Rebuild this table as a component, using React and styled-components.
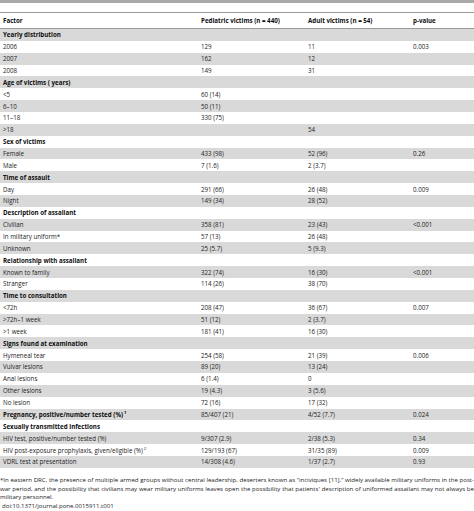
import React from "react";
import styled, { createGlobalStyle } from "styled-components";

const GlobalStyle = createGlobalStyle`
  html, body {
    margin: 0;
    padding: 0;
    background: #ffffff;
  }
  body {
    font-family: "Open Sans", "Noto Sans", "DejaVu Sans", sans-serif;
    color: #1e1e1e;
  }
`;

const Page = styled.div`
  width: 474px;
  height: 511px;
  overflow: hidden;
`;

const TopBand = styled.div`
  height: 3px;
  background: #a9a9a9;
  margin-bottom: 9px;
`;

const Table = styled.div`
  display: grid;
  grid-template-columns: 198px 107px 105px 1fr;
  border-top: 1px solid #9a9a9a;
`;

const Row = styled.div`
  display: contents;
`;

const Cell = styled.div`
  display: flex;
  align-items: center;
  height: ${(p) => (p.$head ? "15px" : "11.86px")};
  padding-left: 3px;
  font-size: 6.2px;
  font-weight: ${(p) => (p.$bold ? 700 : 400)};
  color: ${(p) => (p.$bold ? "#0e0e0e" : "#222222")};
  background: ${(p) => (p.$shade ? "#d9d9d9" : "#ffffff")};
  border-bottom: ${(p) => (p.$head ? "1px solid #9a9a9a" : "none")};
  white-space: nowrap;

  sup {
    font-size: 4.2px;
    line-height: 0;
    position: relative;
    top: -1.5px;
    vertical-align: baseline;
    margin-left: 1px;
  }
`;

const Notes = styled.div`
  margin-top: 8px;
  font-size: 6.1px;
  line-height: 8.7px;
  color: #222222;
`;

const NoteLine = styled.div`
  text-align: ${(p) => (p.$fill ? "justify" : "left")};
  text-align-last: ${(p) => (p.$fill ? "justify" : "left")};
  white-space: nowrap;
  padding-left: ${(p) => (p.$indent ? "2px" : "0")};
`;

const rows = [
  { group: "Yearly distribution" },
  { f: "2006", a: "129", b: "11", p: "0.003" },
  { f: "2007", a: "162", b: "12" },
  { f: "2008", a: "149", b: "31" },
  { group: "Age of victims ( years)" },
  { f: "<5", a: "60 (14)" },
  { f: "6–10", a: "50 (11)" },
  { f: "11–18", a: "330 (75)" },
  { f: ">18", b: "54" },
  { group: "Sex of victims" },
  { f: "Female", a: "433 (98)", b: "52 (96)", p: "0.26" },
  { f: "Male", a: "7 (1.6)", b: "2 (3.7)" },
  { group: "Time of assault" },
  { f: "Day", a: "291 (66)", b: "26 (48)", p: "0.009" },
  { f: "Night", a: "149 (34)", b: "28 (52)" },
  { group: "Description of assailant" },
  { f: "Civilian", a: "358 (81)", b: "23 (43)", p: "<0.001" },
  { f: "In military uniform*", a: "57 (13)", b: "26 (48)" },
  { f: "Unknown", a: "25 (5.7)", b: "5 (9.3)" },
  { group: "Relationship with assailant" },
  { f: "Known to family", a: "322 (74)", b: "16 (30)", p: "<0.001" },
  { f: "Stranger", a: "114 (26)", b: "38 (70)" },
  { group: "Time to consultation" },
  { f: "<72h", a: "208 (47)", b: "36 (67)", p: "0.007" },
  { f: ">72h–1 week", a: "51 (12)", b: "2 (3.7)" },
  { f: ">1 week", a: "181 (41)", b: "16 (30)" },
  { group: "Signs found at examination" },
  { f: "Hymeneal tear", a: "254 (58)", b: "21 (39)", p: "0.006" },
  { f: "Vulvar lesions", a: "89 (20)", b: "13 (24)" },
  { f: "Anal lesions", a: "6 (1.4)", b: "0" },
  { f: "Other lesions", a: "19 (4.3)", b: "3 (5.6)" },
  { f: "No lesion", a: "72 (16)", b: "17 (32)" },
  {
    f: "Pregnancy, positive/number tested (%)",
    sup: "1",
    bold: true,
    a: "85/407 (21)",
    b: "4/52 (7.7)",
    p: "0.024",
  },
  { group: "Sexually transmitted infections" },
  { f: "HIV test, positive/number tested (%)", a: "9/307 (2.9)", b: "2/38 (5.3)", p: "0.34" },
  {
    f: "HIV post-exposure prophylaxis, given/eligible (%)",
    sup: "2",
    a: "129/193 (67)",
    b: "31/35 (89)",
    p: "0.009",
  },
  { f: "VDRL test at presentation", a: "14/308 (4.6)", b: "1/37 (2.7)", p: "0.93" },
];

const App = () => {
  return (
    <>
      <GlobalStyle />
      <Page>
        <TopBand />
        <Table>
          <Row>
            <Cell $head $bold>Factor</Cell>
            <Cell $head $bold>Pediatric victims (n = 440)</Cell>
            <Cell $head $bold>Adult victims (n = 54)</Cell>
            <Cell $head $bold>p-value</Cell>
          </Row>
          {rows.map((r, idx) => {
            const shade = idx % 2 === 0;
            if (r.group) {
              return (
                <Row key={idx}>
                  <Cell $bold $shade={shade}>{r.group}</Cell>
                  <Cell $shade={shade} />
                  <Cell $shade={shade} />
                  <Cell $shade={shade} />
                </Row>
              );
            }
            return (
              <Row key={idx}>
                <Cell $bold={r.bold} $shade={shade}>
                  {r.f}
                  {r.sup && <sup>{r.sup}</sup>}
                </Cell>
                <Cell $shade={shade}>{r.a || ""}</Cell>
                <Cell $shade={shade}>{r.b || ""}</Cell>
                <Cell $shade={shade}>{r.p || ""}</Cell>
              </Row>
            );
          })}
        </Table>
        <Notes>
          <NoteLine $fill>
            *In eastern DRC, the presence of multiple armed groups without central leadership, deserters known as “inciviques [11],” widely available military uniforms in the post-
          </NoteLine>
          <NoteLine $fill>
            war period, and the possibility that civilians may wear military uniforms leaves open the possibility that patients' description of uniformed assailant may not always be
          </NoteLine>
          <NoteLine>military personnel.</NoteLine>
          <NoteLine $indent>doi:10.1371/journal.pone.0015911.t001</NoteLine>
        </Notes>
      </Page>
    </>
  );
};

export default App;
